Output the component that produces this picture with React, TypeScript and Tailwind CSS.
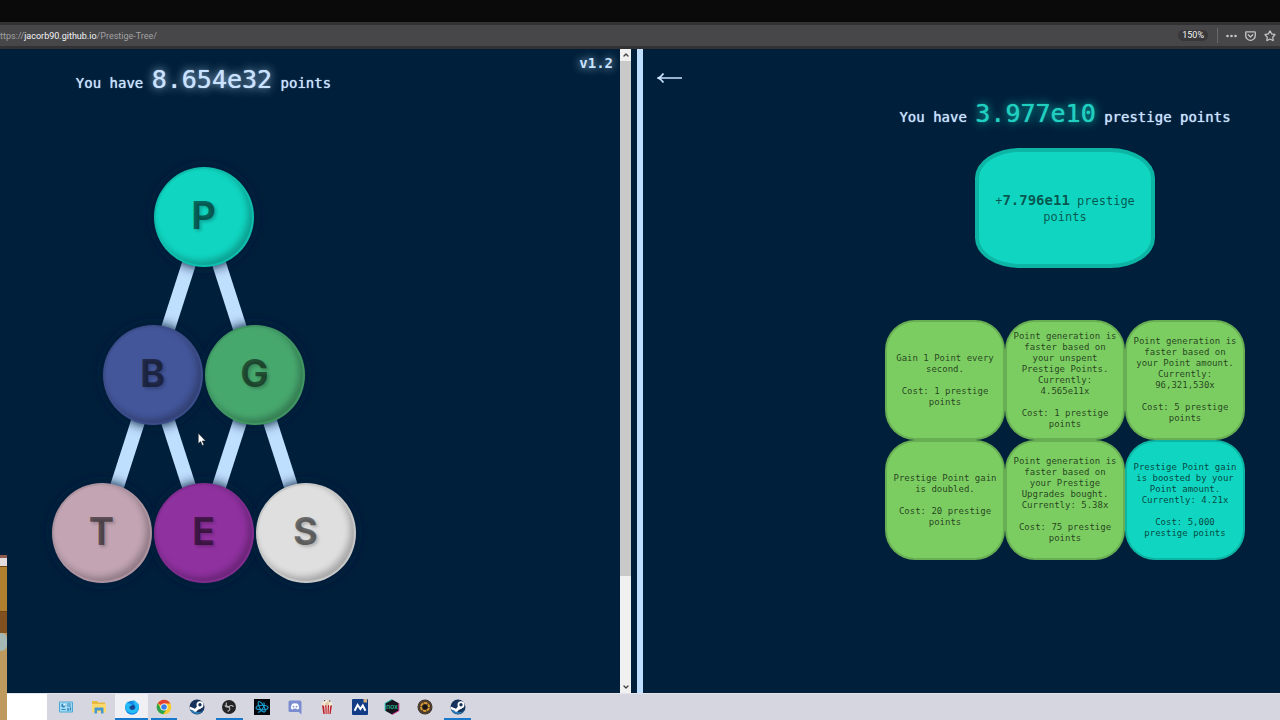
import type { ReactNode } from 'react'
import { ChevronDown, ChevronUp, Star } from 'lucide-react'

interface NodeProps {
  label: string
  color: string
}

interface Upgrade {
  text: string
  cost: string
  bought: boolean
}

const upgrades: Upgrade[] = [
  { text: 'Gain 1 Point every second.', cost: '1', bought: true },
  { text: 'Point generation is faster based on your unspent Prestige Points.\nCurrently: 4.565e11x', cost: '1', bought: true },
  { text: 'Point generation is faster based on your Point amount.\nCurrently: 96,321,530x', cost: '5', bought: true },
  { text: 'Prestige Point gain is doubled.', cost: '20', bought: true },
  { text: 'Point generation is faster based on your Prestige Upgrades bought.\nCurrently: 5.38x', cost: '75', bought: true },
  { text: 'Prestige Point gain is boosted by your Point amount.\nCurrently: 4.21x', cost: '5,000', bought: false },
]

// centres of the layer nodes inside the 304x416 tree
const centres = [[152, 50], [101, 208], [203, 208], [50, 366], [152, 366], [254, 366]]
const branches = [[0, 1], [0, 2], [1, 3], [1, 4], [2, 4], [2, 5]]

const TreeNode = ({ label, color }: NodeProps) => (
  <button
    type="button"
    className={`h-[100px] w-[100px] rounded-full border-2 border-black/10 pb-1 font-[Inter,sans-serif] text-[38px] font-bold text-black/50 shadow-[inset_-4px_-4px_6px_rgba(0,0,0,0.25)] [text-shadow:2px_2px_3px_rgba(0,0,0,0.2)] ${color}`}
  >
    {label}
  </button>
)

const Tree = () => (
  <div className="relative mx-auto flex w-[304px] flex-col items-center gap-[58px]">
    <svg className="absolute inset-0 h-full w-full overflow-visible" viewBox="0 0 304 416" aria-hidden="true">
      <defs>
        <filter id="glow" x="-30%" y="-30%" width="160%" height="160%">
          <feGaussianBlur stdDeviation="6" />
        </filter>
      </defs>
      {branches.map(([a, b]) => (
        <line
          key={`${a}-${b}`}
          x1={centres[a][0]}
          y1={centres[a][1]}
          x2={centres[b][0]}
          y2={centres[b][1]}
          stroke="#bfdfff"
          strokeWidth="14"
        />
      ))}
      {centres.map(([x, y]) => (
        <circle key={`${x}-${y}`} cx={x} cy={y} r="51" fill="#001f3a" filter="url(#glow)" style={{ colorInterpolationFilters: 'sRGB' }} />
      ))}
    </svg>
    <div className="relative flex gap-0.5">
      <TreeNode label="P" color="bg-[#10d5c1]" />
    </div>
    <div className="relative flex gap-0.5">
      <TreeNode label="B" color="bg-[#43569a]" />
      <TreeNode label="G" color="bg-[#47a86e]" />
    </div>
    <div className="relative flex gap-0.5">
      <TreeNode label="T" color="bg-[#c2a4b3]" />
      <TreeNode label="E" color="bg-[#9031a0]" />
      <TreeNode label="S" color="bg-[#dfdfdf]" />
    </div>
  </div>
)

const AddressBar = () => (
  <header className="bg-[#323234]">
    <div className="h-[22px] bg-[#0a0a0a]" />
    <div className="my-[3px] flex h-[21px] items-center bg-[#474749] font-[Roboto,sans-serif] text-[9px] text-[#a0a0a2]">
      <p className="flex-1 pt-px whitespace-nowrap">
        ttps://<span className="text-[#f4f4f5]">jacorb90.github.io</span>/Prestige-Tree/
      </p>
      <button type="button" className="rounded-full bg-[#38383a] px-1 text-[9px] leading-[11px] text-[#f4f4f5]">150%</button>
      <span className="mr-2 ml-[9px] h-[15px] w-px bg-[#68686a]" />
      <div className="flex items-center gap-2 pr-1 text-[#c4c4c6]">
        <button type="button" aria-label="Page actions">
          <svg className="h-3 w-[11px]" viewBox="0 0 11 12" fill="currentColor">
            <circle cx="1.5" cy="6" r="1.3" />
            <circle cx="5.5" cy="6" r="1.3" />
            <circle cx="9.5" cy="6" r="1.3" />
          </svg>
        </button>
        <button type="button" aria-label="Save to Pocket">
          <svg className="h-3 w-[11px]" viewBox="0 0 11 12" fill="none" stroke="currentColor" strokeWidth="1.3" strokeLinecap="round" strokeLinejoin="round">
            <path d="M1.4 1.8h8.2q.7 0 .7.7v3a4.8 4.8 0 0 1-9.6 0v-3q0-.7.7-.7Z" />
            <path d="m3.2 4.8 2.3 2.2 2.3-2.2" />
          </svg>
        </button>
        <button type="button" aria-label="Bookmark">
          <Star className="h-3 w-3" strokeWidth={2.5} />
        </button>
      </div>
    </div>
  </header>
)

const Scrollbar = () => (
  <div className="flex w-[11px] flex-col bg-[#f0f0f0] text-[#404040]">
    <button type="button" aria-label="Scroll up" className="flex h-3 items-center justify-center">
      <ChevronUp className="h-2 w-2" strokeWidth={4} />
    </button>
    <div className="grow-[514] bg-[#c9c9c9]" />
    <div className="grow-[105]" />
    <button type="button" aria-label="Scroll down" className="flex h-3 items-center justify-center">
      <ChevronDown className="h-2 w-2" strokeWidth={4} />
    </button>
  </div>
)

const Steam = () => (
  <>
    <circle cx="8" cy="8" r="7.5" fill="#16325c" />
    <path d="M1 10.5 5.5 12a7.5 7.5 0 0 0 9-1A7.5 7.5 0 0 1 1 10.5Z" fill="#2a7cb8" />
    <path d="M.6 7.5 6 9.8l2.8-3.2 3.4 2.8-3.6 1.6a2.3 2.3 0 0 1-4.3.6L1 10.2Z" fill="#fff" />
    <circle cx="11" cy="5.7" r="2.6" fill="#16325c" stroke="#fff" strokeWidth="1.8" />
  </>
)

const apps: { name: string; running?: boolean; active?: boolean; icon: ReactNode }[] = [
  {
    name: 'Control Panel',
    icon: (
      <>
        <rect x="1" y="2.5" width="14" height="11" rx="1" fill="#4aa8d6" />
        <rect x="2" y="3.5" width="12" height="9" fill="#a6dcf3" />
        <circle cx="5.3" cy="6.6" r="2.1" fill="#338dc6" />
        <path d="M5.3 6.6V4.5a2.1 2.1 0 0 1 2.1 2.1Z" fill="#fff" />
        <path d="M9 5h4M9 7h4M3.5 10.5h4" stroke="#2c82b8" />
        <path d="M10 9v3M12.4 8.5v3" stroke="#2c82b8" strokeWidth="1.4" />
      </>
    ),
  },
  {
    name: 'File Explorer',
    icon: (
      <>
        <path d="M1 2h5l1.3 1.5H14V13H1Z" fill="#e9b83f" />
        <path d="M1 5h14v8.5H1Z" fill="#fbd96c" />
        <path d="M3.5 14.5V9.2q0-.7.7-.7h7.6q.7 0 .7.7v5.3H10V11.5H6v3Z" fill="#4698d3" />
      </>
    ),
  },
  {
    name: 'Firefox',
    running: true,
    active: true,
    icon: (
      <>
        <circle cx="8" cy="8.7" r="7" fill="#1689e8" />
        <path d="M1.2 7.5C1.5 5 2.5 3.4 3.7 2.2c0 1.2.4 1.8 1 2.3C6.2 4.2 7 5.5 8.5 6c-1 1-2.6.7-3 2.3.5 3 4.4 3.3 5.7 1.2 1-2 0-3.8-1.4-4.7C9.9 3 9.5 2 8.8.7c3 1 4.4 3 4.7 4.6.7-.3.8-1 .8-1.4 1.2 2.6.9 5.1-.2 7A7 7 0 0 1 1.2 7.5Z" fill="#25bbf5" />
        <path d="M5.4 8.2c.5-1.4 2.2-1.2 3.1-2.2 1.3 0 2.7 1.2 2.5 3-1 2.5-5 2.5-5.6-.8Z" fill="#18458f" />
      </>
    ),
  },
  {
    name: 'Chrome',
    running: true,
    icon: (
      <>
        <circle cx="8" cy="8" r="7.3" fill="#f7cb2f" />
        <path d="M8 8 1.7 4.3A7.3 7.3 0 0 1 14.3 4.4L8 4.5Z" fill="#e34133" />
        <path d="M1.7 4.3A7.3 7.3 0 0 0 7.2 15.3L11 9.8 8 8 5 9.8Z" fill="#2ca24c" />
        <circle cx="8" cy="8" r="3.6" fill="#fff" />
        <circle cx="8" cy="8" r="2.8" fill="#397ee8" />
      </>
    ),
  },
  { name: 'Steam', icon: <Steam /> },
  {
    name: 'OBS Studio',
    running: true,
    icon: (
      <>
        <circle cx="8" cy="8" r="7" fill="#242326" />
        <path d="M5.4 4a2.6 2.6 0 0 0 2.4 3.7M8.1 8c.9-1.9 3-1.9 4-.6M8.1 8.2c1.4 1.7.4 3.4-1.2 3.9M7.8 8c-1.8.3-3 0-3.7-1.3" fill="none" stroke="#b9b7b9" strokeWidth="1.2" strokeLinecap="round" />
      </>
    ),
  },
  {
    name: 'Battle.net',
    icon: (
      <>
        <rect width="16" height="16" fill="#05070c" />
        <g fill="none" stroke="#1b9fd5" strokeWidth="1.1">
          <path d="M5 2.5c2 .5 4 3 5.2 5.5s1.6 4.5.3 5c-1.5.3-4-2-5.300-5S3.800 2.800 5 2.500Z" />
          <path d="M2 9c0-1.700 3-2.800 6-2.800s6 .8 6 2.300-2.700 2.300-5.700 2.300S2 10.300 2 9Z" />
          <path d="M9.500 3.500c1.300.6.800 3.400-.8 6s-3.700 4.200-4.700 3.400" />
        </g>
      </>
    ),
  },
  {
    name: 'Discord',
    icon: (
      <>
        <path d="M3.2 1.5h9.6q1.7 0 1.7 1.7V15.5l-2.8-2.4H3.2q-1.7 0-1.7-1.7V3.2q0-1.7 1.7-1.7Z" fill="#7b8bd0" />
        <path d="M5.2 4.8q2.8-.9 5.6 0 1.3 2 1.4 4.6-1 .9-2.2 1l-.6-.9H6.6l-.6.9q-1.2-.1-2.2-1 .1-2.6 1.4-4.6Z" fill="#fff" />
        <circle cx="6.5" cy="7.6" r=".9" fill="#7b8bd0" />
        <circle cx="9.5" cy="7.6" r=".9" fill="#7b8bd0" />
      </>
    ),
  },
  {
    name: 'Popcorn Time',
    icon: (
      <>
        <path d="M3 6h10l-1.3 9H4.3Z" fill="#f3dcdc" />
        <path d="M3 6h2l.8 9H4.3ZM6.2 6h1.3l.2 9H6.6ZM8.8 6h1.3l-.5 9H8.5ZM11.3 6H13l-1.3 9h-1.3Z" fill="#b8202b" />
        <circle cx="4.6" cy="4.7" r="2" fill="#f1e6cd" />
        <circle cx="7" cy="3" r="2" fill="#f8f1e2" />
        <circle cx="9.6" cy="3" r="2" fill="#e8d8b8" />
        <circle cx="11.6" cy="5" r="1.8" fill="#f5ead2" />
        <circle cx="8" cy="5" r="1.8" fill="#dcc6a5" />
        <path d="M5 1.7h1.3M10 2h1.3" stroke="#4c3b36" />
      </>
    ),
  },
  {
    name: 'Malwarebytes',
    icon: (
      <>
        <rect width="16" height="16" rx="1" fill="#123c86" />
        <path d="M2.6 11.8 5.6 6 8.4 10 10.8 6.4 13.4 11.8" fill="none" stroke="#fff" strokeWidth="2" />
        <path d="M11.5 0H15v3.5h-3.5Z" fill="#d6b27c" />
      </>
    ),
  },
  {
    name: 'Nox',
    icon: (
      <>
        <path d="m8 .5 6.8 3.7v7.6L8 15.5l-6.8-3.7V4.2Z" fill="#16151d" />
        <path d="M1.2 11.8V4.2L8 .5" fill="none" stroke="#21bda3" />
        <path d="M14.8 4.2v7.6L8 15.5" fill="none" stroke="#c22c86" />
        <text x="8" y="10" textAnchor="middle" fontSize="7" fill="#2dd4a8" fontFamily="Roboto, sans-serif">nox</text>
      </>
    ),
  },
  {
    name: 'Overwolf',
    icon: (
      <>
        <circle cx="8" cy="8" r="7.5" fill="#352c25" />
        <circle cx="8" cy="8" r="6.3" fill="none" stroke="#6e563b" strokeWidth=".8" />
        <circle cx="8" cy="8" r="4" fill="none" stroke="#d99a35" strokeWidth="2" />
        <circle cx="8" cy="8" r="4" fill="none" stroke="#352c25" strokeWidth="2" strokeDasharray=".6 3.6" />
        <circle cx="8" cy="8" r="2.2" fill="#171412" />
      </>
    ),
  },
  { name: 'Steam game', running: true, icon: <Steam /> },
]

const Taskbar = () => (
  <footer className="flex h-[27px] border-t border-[#e4e4ea] bg-[#d6d6e0] pl-[7px]">
    <div className="w-10 bg-white" />
    <nav className="ml-[3px] grid w-[424px] grid-cols-13">
      {apps.map((app) => (
        <button
          key={app.name}
          type="button"
          aria-label={app.name}
          className={`relative flex items-center justify-center ${app.active ? 'bg-[#f0f0f4]' : ''}`}
        >
          <svg className="h-4 w-4" viewBox="0 0 16 16">{app.icon}</svg>
          {app.running && (
            <span className={`absolute bottom-0 h-0.5 bg-[#1879cc] ${app.active ? 'inset-x-0' : 'inset-x-[3px]'}`} />
          )}
        </button>
      ))}
    </nav>
  </footer>
)

const App = () => {
  return (
    <div className="relative flex min-h-screen flex-col overflow-hidden bg-[#001f3a] font-['DejaVu_Sans_Mono',monospace] text-sm text-[#c9e2ff]">
      <AddressBar />
      <main className="flex flex-1">
        <section className="flex flex-1">
          <div className="flex flex-1 justify-between">
            <div className="w-[407px] pt-[13px]">
              <p className="mb-[66px] text-center leading-9 [text-shadow:0_0_1px_#c9e2ff]">
                You have{' '}
                <span className="text-[25px] [text-shadow:0_0_1px_#c9e2ff,0_0_10px_#bfdfff]">8.654e32</span> points
              </p>
              <Tree />
            </div>
            <p className="pt-1 pr-[7px] leading-5 font-bold [text-shadow:0_0_8px_#bfdfff]">v1.2</p>
          </div>
          <Scrollbar />
          <div className="w-1.5" />
        </section>
        <div className="w-1.5 bg-[#bfdfff]" />
        <section className="flex-1">
          <div className="flex items-start justify-between pl-3.5">
            <button type="button" aria-label="Back" className="pt-[22px]">
              <svg className="h-3.5 w-[26px]" viewBox="0 0 26 14" fill="none" stroke="currentColor" strokeWidth="1.7">
                <path d="M1 7h24M6.5 2.5Q4 6 1 7q3 1 5.5 4.5" />
              </svg>
            </button>
            <div className="mr-[35px] flex w-[360px] flex-col items-center pt-[47px]">
              <p className="mb-[13px] leading-9 whitespace-nowrap [text-shadow:0_0_1px_#c9e2ff]">
                You have{' '}
                <span className="text-[25px] text-[#20cfbf] [text-shadow:0_0_1px_#20cfbf,0_0_10px_#10d5c1]">3.977e10</span> prestige points
              </p>
              <button
                type="button"
                className="mb-[52px] flex h-[120px] w-[180px] flex-col items-center justify-center rounded-[25%] border-4 border-black/15 bg-[#10d5c1] text-xs leading-4 text-black/60"
              >
                <span>
                  +<b className="text-sm leading-4">7.796e11</b> prestige
                </span>
                <span>points</span>
              </button>
              <div className="grid grid-cols-3">
                {upgrades.map((upgrade) => (
                  <button
                    key={upgrade.text}
                    type="button"
                    className={`h-[120px] w-[120px] rounded-[30px] border-2 border-black/15 px-1.5 text-[9px] leading-[11px] whitespace-pre-line text-black/70 ${upgrade.bought ? 'bg-[#7bcd62]' : 'bg-[#10d5c1]'}`}
                  >
                    {`${upgrade.text}\n\nCost: ${upgrade.cost} prestige points`}
                  </button>
                ))}
              </div>
            </div>
          </div>
        </section>
      </main>
      <Taskbar />

      {/* webcam edge */}
      <div className="absolute bottom-0 left-0 flex h-[165px] w-[7px] flex-col bg-[#bf9a5f]">
        <div className="h-[3px] bg-[#8d5a50]" />
        <div className="h-2 bg-[#e3dcdc]" />
        <div className="h-[46px] border-y border-[#6f4517] bg-[#b1802f]" />
        <div className="h-[21px] bg-[#81501f]" />
        <div className="h-[18px] rounded-r-md bg-[#a3b8b4]" />
      </div>

      {/* mouse pointer */}
      <svg className="pointer-events-none absolute top-[433px] left-[198px] h-[13px] w-2" viewBox="0 0 8 13" fill="#fff" stroke="#222" strokeWidth=".5">
        <path d="M.3.3v10.2l2.3-2.1 1.7 4 1.6-.7-1.7-3.8h3.3Z" />
      </svg>
    </div>
  )
}

export default App
